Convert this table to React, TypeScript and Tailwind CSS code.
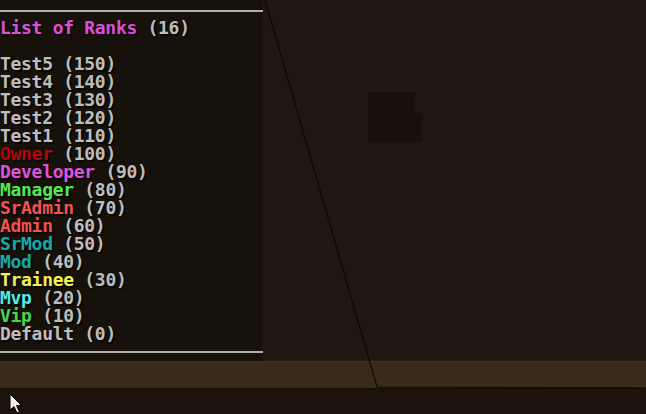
import React from "react";

type Rank = { name: string; weight: number; color: string };

const ranks: Rank[] = [
  { name: "Test5", weight: 150, color: "text-[#bdbdbd]" },
  { name: "Test4", weight: 140, color: "text-[#bdbdbd]" },
  { name: "Test3", weight: 130, color: "text-[#bdbdbd]" },
  { name: "Test2", weight: 120, color: "text-[#bdbdbd]" },
  { name: "Test1", weight: 110, color: "text-[#bdbdbd]" },
  { name: "Owner", weight: 100, color: "text-[#b00808]" },
  { name: "Developer", weight: 90, color: "text-[#de52de]" },
  { name: "Manager", weight: 80, color: "text-[#52e852]" },
  { name: "SrAdmin", weight: 70, color: "text-[#f05252]" },
  { name: "Admin", weight: 60, color: "text-[#f05252]" },
  { name: "SrMod", weight: 50, color: "text-[#16a8a8]" },
  { name: "Mod", weight: 40, color: "text-[#16a8a8]" },
  { name: "Trainee", weight: 30, color: "text-[#f2f252]" },
  { name: "Mvp", weight: 20, color: "text-[#52eaea]" },
  { name: "Vip", weight: 10, color: "text-[#44d844]" },
  { name: "Default", weight: 0, color: "text-[#bdbdbd]" },
];

const line = "flex h-[18px] whitespace-pre [text-shadow:2px_2px_0_rgba(0,0,0,0.55)]";
const seg = "inline-block h-[18px] leading-[18px]";

export default function App() {
  return (
    <div className="relative flex h-[414px] w-[646px] flex-col overflow-hidden bg-[#1f1710] font-['DejaVu_Sans_Mono',monospace] text-[18px] font-bold tracking-[-0.3px]">
      {/* chat */}
      <div className="h-[361px] w-[263px] bg-[#17110b] pt-[10px]">
        <div className="h-[2px] bg-[#b4b0a6]" />
        <div className="pt-[7px]">
          <div className={line}>
            <span className={`${seg} text-[#dc4edc]`}>List of Ranks</span>
            <span className={`${seg} text-[#bdbdbd]`}> (16)</span>
          </div>
          <div className={line} />
          {ranks.map((r) => (
            <div key={r.name} className={line}>
              <span className={`${seg} ${r.color}`}>{r.name}</span>
              <span className={`${seg} text-[#bdbdbd]`}> ({r.weight})</span>
            </div>
          ))}
        </div>
        <div className="mt-[8px] h-[2px] bg-[#b4b0a6]" />
      </div>

      {/* hotbar strip */}
      <div className="h-[27px] border-t border-[#43321f] bg-[#3a2a1a]" />
      <div className="flex-1 border-t border-[#120c07] bg-[#1c140c]" />

      {/* world details */}
      <div className="absolute left-[368px] top-[92px] h-[50px] w-[47px] bg-[#17100b]" />
      <div className="absolute left-[415px] top-[113px] h-[29px] w-[7px] bg-[#17100b]" />
      <svg className="absolute left-0 top-0" width="646" height="414">
        <polyline
          points="265,0 377,387 646,388"
          fill="none"
          stroke="#0e0905"
          strokeWidth="1.2"
        />
      </svg>

      {/* cursor */}
      <svg className="absolute left-[9px] top-[393px]" width="14" height="22" viewBox="0 0 14 22">
        <path
          d="M1 1 L1 17 L5 13.5 L8 20 L10.5 19 L7.5 12.5 L12.5 12.5 Z"
          fill="#f4f0e8"
          stroke="#000"
          strokeWidth="1"
        />
      </svg>
    </div>
  );
}
